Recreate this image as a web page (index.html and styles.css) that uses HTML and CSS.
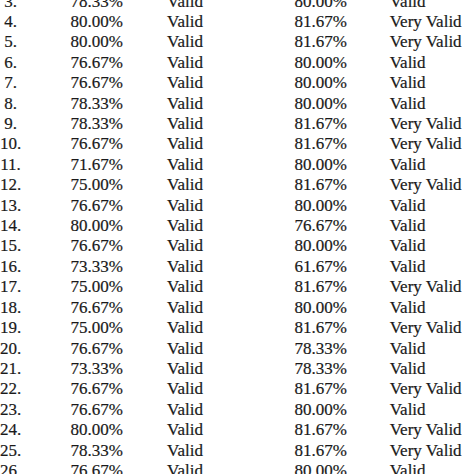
FILE: index.html
```html
<!DOCTYPE html>
<html>
<head>
<meta charset="utf-8">
<link rel="stylesheet" href="styles.css">
</head>
<body>
<table class="results">
<colgroup>
<col class="c-no"><col class="c-p1"><col class="c-v1"><col class="c-p2"><col class="c-v2">
</colgroup>
<tbody>
<tr><td class="no">3.</td><td>78.33%</td><td>Valid</td><td>80.00%</td><td>Valid</td></tr>
<tr><td class="no">4.</td><td>80.00%</td><td>Valid</td><td>81.67%</td><td>Very Valid</td></tr>
<tr><td class="no">5.</td><td>80.00%</td><td>Valid</td><td>81.67%</td><td>Very Valid</td></tr>
<tr><td class="no">6.</td><td>76.67%</td><td>Valid</td><td>80.00%</td><td>Valid</td></tr>
<tr><td class="no">7.</td><td>76.67%</td><td>Valid</td><td>80.00%</td><td>Valid</td></tr>
<tr><td class="no">8.</td><td>78.33%</td><td>Valid</td><td>80.00%</td><td>Valid</td></tr>
<tr><td class="no">9.</td><td>78.33%</td><td>Valid</td><td>81.67%</td><td>Very Valid</td></tr>
<tr><td class="no">10.</td><td>76.67%</td><td>Valid</td><td>81.67%</td><td>Very Valid</td></tr>
<tr><td class="no">11.</td><td>71.67%</td><td>Valid</td><td>80.00%</td><td>Valid</td></tr>
<tr><td class="no">12.</td><td>75.00%</td><td>Valid</td><td>81.67%</td><td>Very Valid</td></tr>
<tr><td class="no">13.</td><td>76.67%</td><td>Valid</td><td>80.00%</td><td>Valid</td></tr>
<tr><td class="no">14.</td><td>80.00%</td><td>Valid</td><td>76.67%</td><td>Valid</td></tr>
<tr><td class="no">15.</td><td>76.67%</td><td>Valid</td><td>80.00%</td><td>Valid</td></tr>
<tr><td class="no">16.</td><td>73.33%</td><td>Valid</td><td>61.67%</td><td>Valid</td></tr>
<tr><td class="no">17.</td><td>75.00%</td><td>Valid</td><td>81.67%</td><td>Very Valid</td></tr>
<tr><td class="no">18.</td><td>76.67%</td><td>Valid</td><td>80.00%</td><td>Valid</td></tr>
<tr><td class="no">19.</td><td>75.00%</td><td>Valid</td><td>81.67%</td><td>Very Valid</td></tr>
<tr><td class="no">20.</td><td>76.67%</td><td>Valid</td><td>78.33%</td><td>Valid</td></tr>
<tr><td class="no">21.</td><td>73.33%</td><td>Valid</td><td>78.33%</td><td>Valid</td></tr>
<tr><td class="no">22.</td><td>76.67%</td><td>Valid</td><td>81.67%</td><td>Very Valid</td></tr>
<tr><td class="no">23.</td><td>76.67%</td><td>Valid</td><td>80.00%</td><td>Valid</td></tr>
<tr><td class="no">24.</td><td>80.00%</td><td>Valid</td><td>81.67%</td><td>Very Valid</td></tr>
<tr><td class="no">25.</td><td>78.33%</td><td>Valid</td><td>81.67%</td><td>Very Valid</td></tr>
<tr><td class="no">26.</td><td>76.67%</td><td>Valid</td><td>80.00%</td><td>Valid</td></tr>
</tbody>
</table>
</body>
</html>
```
FILE: styles.css
```css
html, body {
  margin: 0;
  padding: 0;
  background: #ffffff;
  overflow: hidden;
}
body {
  font-family: "Liberation Serif", "Times New Roman", serif;
  font-size: 17px;
  color: #1a1a1a;
}
.results {
  border-collapse: collapse;
  table-layout: fixed;
  width: 480px;
  margin-top: -8.4px;
  font-family: "Liberation Serif", "Times New Roman", serif;
}
.c-no { width: 70.5px; }
.c-p1 { width: 96.5px; }
.c-v1 { width: 127.5px; }
.c-p2 { width: 95.2px; }
.c-v2 { width: 90.3px; }
.results td {
  padding: 0;
  line-height: 20.4px;
  text-align: left;
  white-space: nowrap;
  vertical-align: baseline;
  -webkit-text-stroke: 0.2px #1a1a1a;
}
.results td.no {
  text-align: center;
  padding-right: 49.5px;
}
```
